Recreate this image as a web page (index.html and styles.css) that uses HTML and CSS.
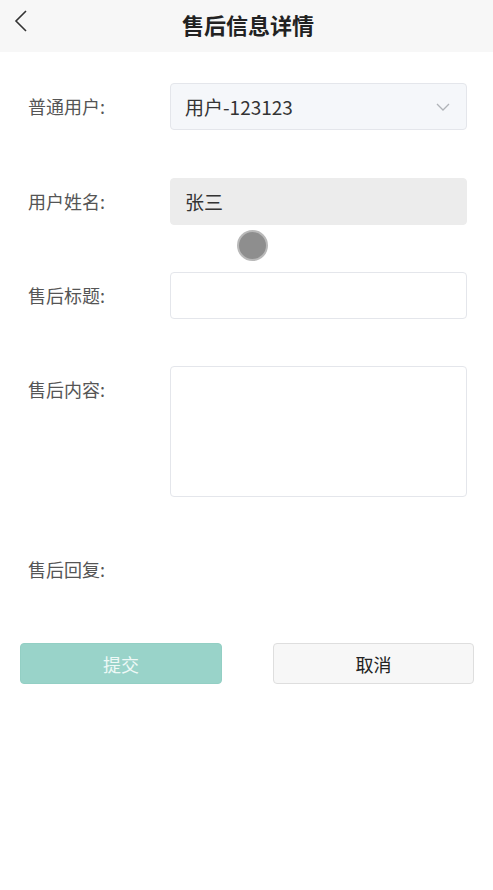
FILE: index.html
```html
<!DOCTYPE html>
<html lang="zh">
<head>
<meta charset="utf-8">
<title>售后信息详情</title>
<link rel="stylesheet" href="styles.css">
</head>
<body>
<header class="topbar">
  <span class="back">
    <svg width="16" height="24" viewBox="0 0 16 24"><path d="M13 2 L3 12 L13 22" fill="none" stroke="#333" stroke-width="1.6"/></svg>
  </span>
  <h1 class="title">售后信息详情</h1>
</header>
<main class="form">
  <div class="row first">
    <label class="label">普通用户:</label>
    <div class="field select">
      <span class="value">用户-123123</span>
      <svg class="arrow" width="14" height="8" viewBox="0 0 14 8"><path d="M1 1 L7 7 L13 1" fill="none" stroke="#b0b3b8" stroke-width="1.3"/></svg>
    </div>
  </div>
  <div class="row">
    <label class="label">用户姓名:</label>
    <div class="field disabled"><span class="value">张三</span>
      <span class="dot"></span>
    </div>
  </div>
  <div class="row">
    <label class="label">售后标题:</label>
    <div class="field input"></div>
  </div>
  <div class="row tall">
    <label class="label">售后内容:</label>
    <div class="field textarea"></div>
  </div>
  <div class="row reply">
    <label class="label">售后回复:</label>
  </div>
  <div class="actions">
    <button class="btn primary">提交</button>
    <button class="btn cancel">取消</button>
  </div>
</main>
</body>
</html>
```
FILE: styles.css
```css
* { box-sizing: border-box; }
html, body { margin: 0; padding: 0; background: #fff; }
body { font-family: "Noto Sans CJK SC", "Noto Sans", sans-serif; width: 493px; }
.topbar {
  height: 52px;
  background: #f7f7f7;
  display: flex;
  align-items: center;
  justify-content: center;
  position: relative;
}
.back { position: absolute; left: 13px; top: 9px; width: 16px; height: 24px; display: flex; }
.title { margin: 0; font-size: 22px; font-weight: 700; color: #222; line-height: 1; margin-top: -4px; margin-left: 3px; }
.form { padding: 31px 26px 0 28px; }
.row { display: flex; align-items: flex-start; margin-bottom: 47px; }
.row.first { margin-bottom: 48px; }
.row.tall { margin-bottom: 49px; }
.label { width: 142px; flex: none; font-size: 18px; color: #555; line-height: 47px; }
.field {
  flex: none;
  width: 297px;
  height: 47px;
  border-radius: 4px;
  border: 1px solid #e4e6eb;
  display: flex;
  align-items: center;
  padding: 0 14px;
  position: relative;
}
.value { font-size: 19px; color: #333; }
.select { background: #f5f7fa; justify-content: space-between; }
.arrow { margin-right: 2px; }
.disabled { background: #ececec; border-color: #ececec; }
.dot {
  position: absolute;
  left: 66px;
  top: 51px;
  width: 31px;
  height: 31px;
  border-radius: 50%;
  background: #8e8e8e;
  border: 2px solid #b9b9b9;
}
.input { background: #fff; }
.textarea { height: 131px; background: #fff; }
.reply { margin-bottom: 0; height: 47px; }
.actions { display: flex; justify-content: space-between; margin: 50px -7px 0 -8px; }
.btn {
  width: 202px;
  height: 41px;
  border-radius: 4px;
  font-family: inherit;
  font-size: 18px;
  cursor: pointer;
}
.cancel { width: 201px; }
.primary { background: #99d3c9; border: 1px solid #93cfc4; color: #eef9f7; }
.cancel { background: #f7f7f7; border: 1px solid #dedede; color: #222; }
```
